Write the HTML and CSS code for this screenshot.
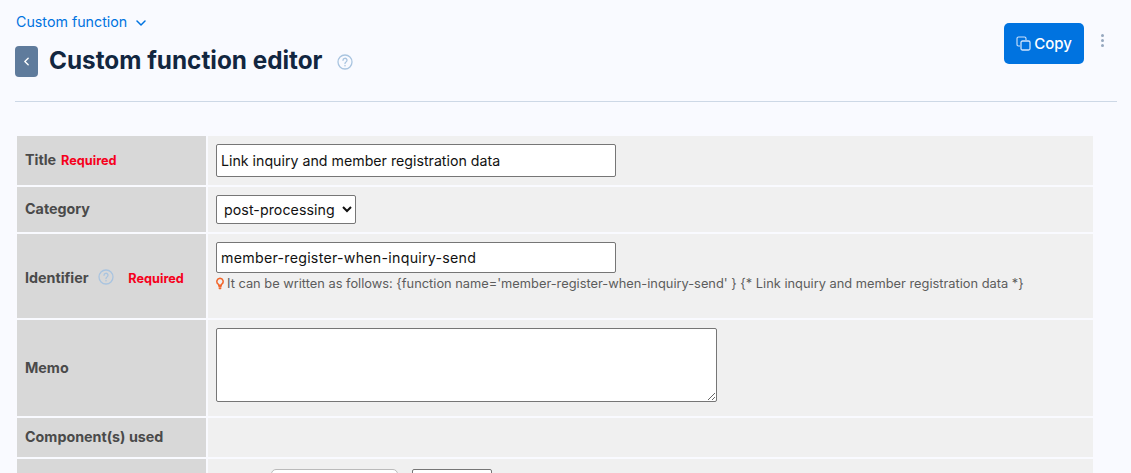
FILE: index.html
```html
<!DOCTYPE html>
<html lang="en">
<head>
<meta charset="utf-8">
<title>Custom function editor</title>
<link rel="stylesheet" href="styles.css">
</head>
<body>
<div class="page">
<header class="head">
  <div class="head-main">
    <a class="crumb">Custom function
      <svg class="crumb-chev" viewBox="0 0 10 6" width="10" height="6"><path d="M1 1l4 4 4-4" fill="none" stroke="currentColor" stroke-width="1.5" stroke-linecap="round" stroke-linejoin="round"/></svg>
    </a>
    <div class="title-row">
      <a class="back"><svg viewBox="0 0 6 10" width="5" height="9"><path d="M5 1L1 5l4 4" fill="none" stroke="#fff" stroke-width="1.6" stroke-linecap="round" stroke-linejoin="round"/></svg></a>
      <h1 class="title">Custom function editor</h1>
      <svg class="help help-lg" viewBox="0 0 16 16"><circle cx="8" cy="8" r="7" fill="none" stroke="currentColor" stroke-width="1.3"/><path d="M6 6.300a2 2 0 1 1 3 1.700c-.7.4-1 .8-1 1.600" fill="none" stroke="currentColor" stroke-width="1.3" stroke-linecap="round"/><circle cx="8" cy="11.700" r=".8" fill="currentColor"/></svg>
    </div>
  </div>
  <div class="head-actions">
    <button class="copy" type="button">
      <svg viewBox="0 0 15 15" width="15" height="15"><path d="M4 10H2.500A1.500 1.500 0 0 1 1 8.500V2.500A1.500 1.500 0 0 1 2.500 1h6A1.500 1.500 0 0 1 10 2.500V4" fill="none" stroke="#cfe4fb" stroke-width="1.100"/><rect x="5" y="5" width="9" height="9" rx="1.500" fill="none" stroke="#cfe4fb" stroke-width="1.300"/></svg>
      Copy
    </button>
    <span class="more"><i></i><i></i><i></i></span>
  </div>
</header>
<hr class="rule">
<table class="form">
  <tr class="r-title">
    <th><span class="lab">Title</span><span class="req">Required</span></th>
    <td><input class="text wide" type="text" value="Link inquiry and member registration data"></td>
  </tr>
  <tr class="r-cat">
    <th><span class="lab">Category</span></th>
    <td><select class="sel"><option>post-processing</option></select></td>
  </tr>
  <tr class="r-id">
    <th><span class="lab">Identifier</span>
      <svg class="help help-sm" viewBox="0 0 16 16"><circle cx="8" cy="8" r="7" fill="none" stroke="currentColor" stroke-width="1.300"/><path d="M6 6.300a2 2 0 1 1 3 1.700c-.7.4-1 .8-1 1.600" fill="none" stroke="currentColor" stroke-width="1.300" stroke-linecap="round"/><circle cx="8" cy="11.700" r=".8" fill="currentColor"/></svg>
      <span class="req req-far">Required</span></th>
    <td class="id-cell">
      <input class="text wide id" type="text" value="member-register-when-inquiry-send">
      <p class="hint"><svg viewBox="0 0 8 12" width="8" height="13"><path d="M4 .8a3.200 3.200 0 0 0-1.800 5.800c.4.3.6.7.6 1.200h2.400c0-.5.2-.9.6-1.200A3.200 3.200 0 0 0 4 .8z" fill="none" stroke="#f2662b" stroke-width="1.500"/><path d="M2.900 9.300h2.200M3.300 11h1.400" stroke="#f2662b" stroke-width="1.400" stroke-linecap="round"/></svg>It can be written as follows: {function name='member-register-when-inquiry-send' } {* Link inquiry and member registration data *}</p>
    </td>
  </tr>
  <tr class="r-memo">
    <th><span class="lab">Memo</span></th>
    <td class="memo-cell"><textarea class="memo"></textarea></td>
  </tr>
  <tr class="r-comp">
    <th><span class="lab">Component(s) used</span></th>
    <td></td>
  </tr>
  <tr class="r-last">
    <th></th>
    <td><div class="last"><span class="pill"></span><span class="box"></span></div></td>
  </tr>
</table>
</div>
</body>
</html>
```
FILE: styles.css
```css
body {
  margin: 0;
  background: #f9faff;
  font-family: "Inter", "Liberation Sans", sans-serif;
  color: #4a4a4a;
}
.page {
  height: 473px;
  overflow: hidden;
}
.head {
  display: flex;
  justify-content: space-between;
  padding: 13px 27px 0 15px;
  height: 101px;
  box-sizing: border-box;
}
.crumb {
  display: flex;
  align-items: center;
  gap: 9px;
  height: 16px;
  padding-left: 1px;
  font-size: 14.25px;
  color: #0073e0;
}
.crumb-chev { margin-top: 3px; }
.title-row {
  display: flex;
  align-items: center;
  margin-top: 17px;
  height: 31px;
}
.back {
  width: 23px;
  height: 31px;
  border-radius: 4px;
  background: #5f7b9c;
  display: flex;
  align-items: center;
  justify-content: center;
}
.title {
  margin: -3px 0 0 11px;
  font-size: 24.3px;
  font-weight: 700;
  color: #122640;
}
.help { color: #a9c4e0; }
.help-lg { width: 16px; height: 16px; margin-left: 14px; margin-top: 1px; }
.head-actions {
  display: flex;
  align-items: flex-start;
  gap: 17px;
  padding-top: 10px;
}
.copy {
  display: flex;
  align-items: center;
  justify-content: center;
  gap: 3px;
  width: 80px;
  height: 41px;
  padding: 0;
  border: 0;
  border-radius: 5px;
  background: #0073e0;
  color: #fff;
  font: 500 15px "Inter", "Liberation Sans", sans-serif;
}
.more {
  display: flex;
  flex-direction: column;
  gap: 2px;
  padding-top: 11px;
}
.more i { width: 3px; height: 3px; border-radius: 50%; background: #96a8bf; }
.rule {
  margin: 0 14px 0 15px;
  border: 0;
  border-top: 1px solid #cdd8e6;
}
.form {
  border-collapse: separate;
  border-spacing: 2px;
  margin: 32px 0 0 15px;
  width: 1080px;
  table-layout: fixed;
  font-size: 14.3px;
}
.form th {
  width: 173px;
  padding: 0 8px 2px;
  background: #d8d8d8;
  text-align: left;
  font-weight: 700;
  white-space: nowrap;
}
.form .r-id th { padding: 2px 8px 0; }
.form td {
  padding: 0 8px;
  background: #f0f0f0;
}
.lab { color: #4a4a4a; }
.req { margin-left: 5px; font-size: 12.7px; color: #f6001c; }
.req-far { margin-left: 11px; }
.help-sm { width: 16px; height: 16px; margin-left: 6px; vertical-align: -2px; }
.r-title { height: 49px; }
.r-cat { height: 45px; }
.r-id { height: 84px; }
.r-memo { height: 96px; }
.r-comp { height: 39px; }
.r-last { height: 60px; }
.text {
  display: block;
  box-sizing: border-box;
  width: 400px;
  height: 33px;
  padding: 0 4px;
  border: 1px solid #767676;
  border-radius: 2px;
  background: #fff;
  color: #111;
  font: 400 14.2px "Inter", "Liberation Sans", sans-serif;
}
.id { height: 31px; letter-spacing: .27px; }
.sel {
  display: block;
  box-sizing: border-box;
  width: 140px;
  height: 29px;
  padding: 0 3px;
  border: 1px solid #767676;
  border-radius: 2px;
  background: #fff;
  color: #111;
  font: 400 14.2px "Inter", "Liberation Sans", sans-serif;
  letter-spacing: .07px;
}
.id-cell { vertical-align: top; padding-top: 8px !important; }
.hint {
  display: flex;
  align-items: center;
  gap: 3px;
  margin: 3px 0 0;
  font-size: 12.83px;
  color: #5c5c5c;
  white-space: nowrap;
}
.form .memo-cell { vertical-align: top; padding-top: 8px; }
.memo {
  display: block;
  box-sizing: border-box;
  width: 501px;
  height: 74px;
  border: 1px solid #767676;
  border-radius: 2px;
  background: #fff;
}
.r-last td { vertical-align: top; }
.last {
  display: flex;
  gap: 14px;
  padding: 10px 0 0 55px;
}
.pill {
  width: 127px;
  height: 30px;
  border: 1px solid #bbb;
  border-radius: 5px;
  box-sizing: border-box;
  background: #fff;
}
.box {
  width: 80px;
  height: 30px;
  border: 1px solid #767676;
  border-radius: 2px;
  box-sizing: border-box;
  background: #fff;
}
```
